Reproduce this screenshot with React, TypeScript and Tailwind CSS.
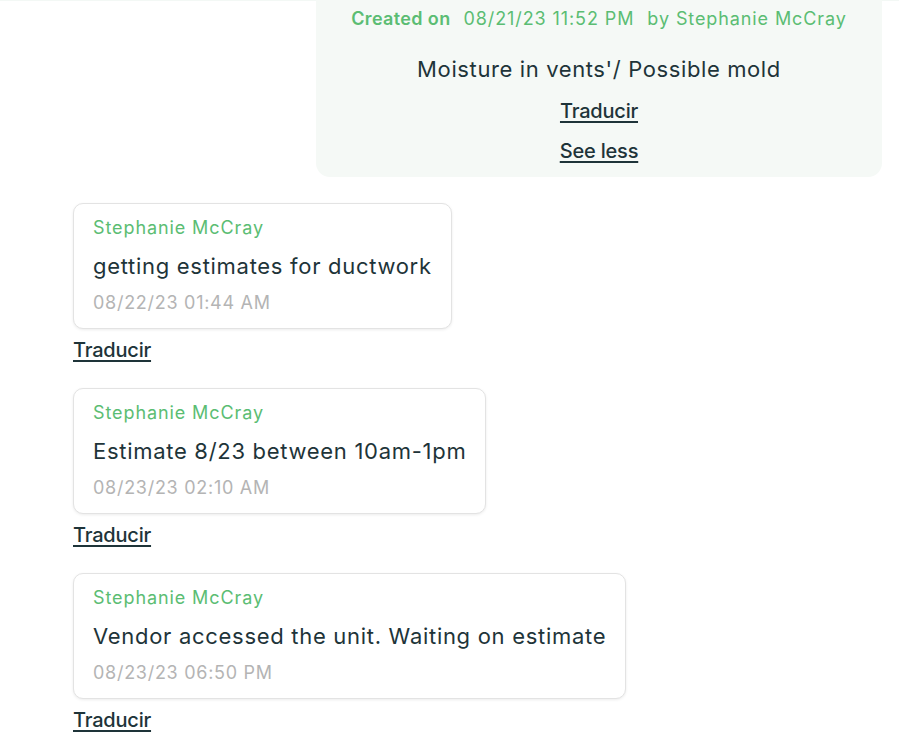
import React from "react";

const notes = [
  { msg: "getting estimates for ductwork", date: "08/22/23 01:44 AM" },
  { msg: "Estimate 8/23 between 10am-1pm", date: "08/23/23 02:10 AM" },
  { msg: "Vendor accessed the unit. Waiting on estimate", date: "08/23/23 06:50 PM" },
];

export default function App() {
  return (
    <div className="relative w-[899px] h-[756px] overflow-hidden bg-white font-['Inter',sans-serif] text-[#1e3439]">
      <div className="h-px bg-[#f3f8f5]" />
      <div className="flex justify-end pr-[17px]">
        <div className="w-[566px] -mt-px h-[177px] rounded-b-[14px] bg-[#f5f9f6] flex flex-col items-center">
          <div className="mt-[7px] h-6 leading-6 text-[18px] tracking-[0.05em] text-[#5bbd73] flex gap-[13px] whitespace-nowrap">
            <span className="font-semibold tracking-[0.02em]">Created on</span>
            <span>08/21/23 11:52 PM</span>
            <span>by Stephanie McCray</span>
          </div>
          <div className="mt-[23px] text-[22px] leading-[30px] tracking-[0.028em]">Moisture in vents'/ Possible mold</div>
          <a className="mt-[13px] text-[20px] leading-[28px] font-medium tracking-[-0.01em] underline underline-offset-[3px] decoration-[1.5px]">Traducir</a>
          <a className="mt-[12px] text-[20px] leading-[28px] font-medium tracking-[-0.01em] underline underline-offset-[3px] decoration-[1.5px]">See less</a>
        </div>
      </div>
      <div className="flex flex-col items-start pl-[73px] mt-[26px]">
        {notes.map((n, i) => (
          <div key={i} className="flex flex-col items-start mb-[24px]">
            <div className="h-[126px] rounded-[10px] border border-[#e3e3e3] bg-white shadow-[0_1px_3px_rgba(0,0,0,0.08)] px-[19px] pt-[12px]">
              <div className="text-[18px] leading-6 tracking-[0.05em] text-[#5bbd73]">Stephanie McCray</div>
              <div className="mt-[11px] text-[22px] leading-[30px] tracking-[0.032em] whitespace-nowrap">{n.msg}</div>
              <div className="mt-[10px] text-[18px] leading-6 tracking-[0.04em] text-[#b4b4b4]">{n.date}</div>
            </div>
            <a className="mt-[7px] text-[20px] leading-[28px] font-medium tracking-[-0.01em] underline underline-offset-[3px] decoration-[1.5px]">Traducir</a>
          </div>
        ))}
      </div>
    </div>
  );
}
